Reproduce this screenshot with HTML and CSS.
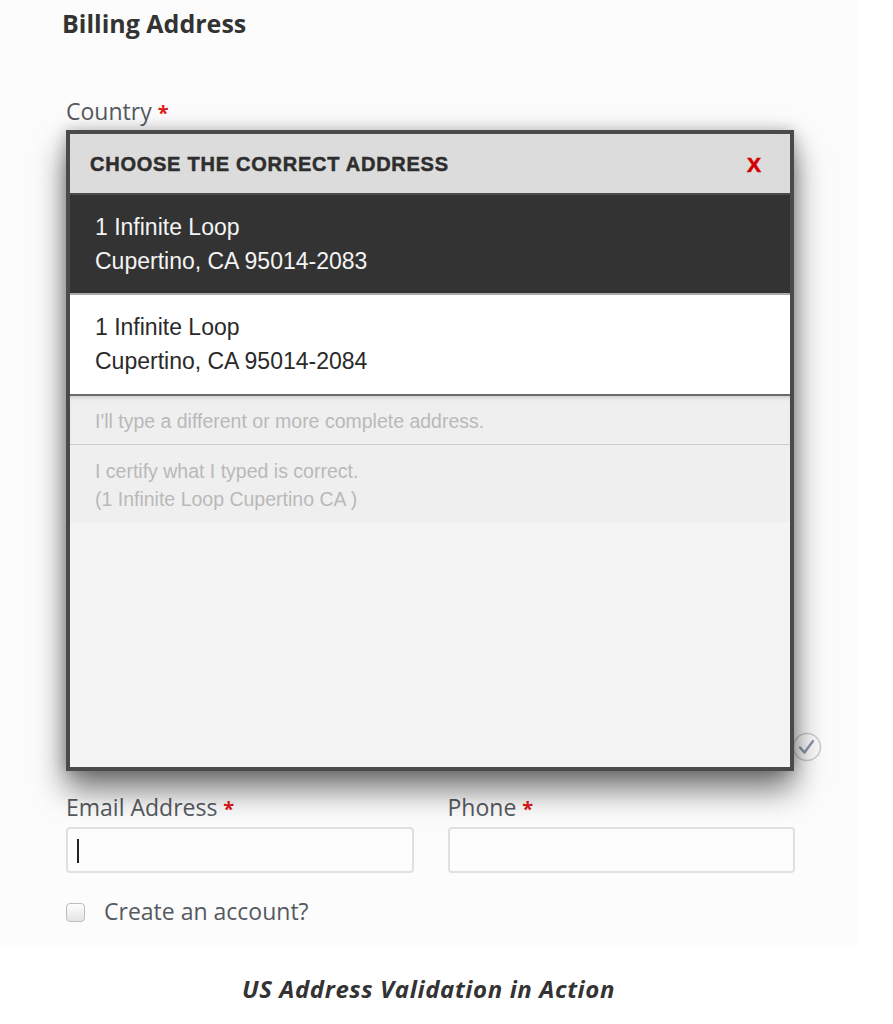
FILE: index.html
```html
<!DOCTYPE html>
<html lang="en">
<head>
<meta charset="utf-8">
<title>US Address Validation in Action</title>
<link rel="stylesheet" href="styles.css">
</head>
<body>
<div class="shot">
  <h2 class="title">Billing Address</h2>
  <div class="form">
    <div class="label">Country <span class="req">*</span></div>
    <div class="hidden-fields">
      <span class="check">
        <svg viewBox="0 0 30 30" width="30" height="30">
          <circle cx="15" cy="15" r="13.5" fill="none" stroke="#cfcfcf" stroke-width="1.6"/>
          <path d="M8 15.5 L12.5 20.5 L21 9" fill="none" stroke="#8b98a8" stroke-width="2.4" stroke-linecap="round" stroke-linejoin="round"/>
        </svg>
      </span>
    </div>
    <div class="modal">
      <div class="modal-head">
        <span class="modal-title">Choose the correct address</span>
        <span class="close">x</span>
      </div>
      <div class="addr addr-active">
        <div>1 Infinite Loop</div>
        <div>Cupertino, CA 95014-2083</div>
      </div>
      <div class="addr addr-plain">
        <div>1 Infinite Loop</div>
        <div>Cupertino, CA 95014-2084</div>
      </div>
      <div class="opt opt-first">I'll type a different or more complete address.</div>
      <div class="opt opt-second">
        <div>I certify what I typed is correct.</div>
        <div>(1 Infinite Loop Cupertino CA )</div>
      </div>
      <div class="modal-rest"></div>
    </div>
    <div class="pair">
      <div class="field">
        <div class="label">Email Address <span class="req">*</span></div>
        <div class="input"><span class="caret"></span></div>
      </div>
      <div class="field">
        <div class="label">Phone <span class="req">*</span></div>
        <div class="input"></div>
      </div>
    </div>
    <div class="cb-row">
      <span class="cb"></span>
      <span class="cb-text">Create an account?</span>
    </div>
  </div>
</div>
<p class="caption">US Address Validation in Action</p>
</body>
</html>
```

FILE: styles.css
```css
* { box-sizing: border-box; }

html, body {
  margin: 0;
  padding: 0;
  background: #ffffff;
}

.shot {
  position: relative;
  width: 857px;
  height: 945px;
  background: #fcfcfc;
  padding-top: 8px;
}

.title {
  margin: 0 0 0 62px;
  font-family: "Open Sans", "Liberation Sans", sans-serif;
  font-weight: 700;
  font-size: 25px;
  line-height: 30px;
  color: #333;
}

.form {
  padding: 59px 62px 0 66px;
}

.label {
  font-family: "Open Sans", "Liberation Sans", sans-serif;
  font-size: 23px;
  line-height: 28px;
  color: #555a60;
}

.req {
  color: #e0191c;
  font-weight: 700;
  font-size: 20px;
}

.hidden-fields {
  height: 666px;
  margin-right: -27px;
  display: flex;
  justify-content: flex-end;
  align-items: flex-end;
  padding-bottom: 31px;
}

.check {
  display: block;
  width: 30px;
  height: 30px;
}
.check svg { display: block; }

.modal {
  position: absolute;
  left: 66px;
  top: 130px;
  width: 728px;
  height: 641px;
  border: 4px solid #4a4a4a;
  background: #f4f4f4;
  display: flex;
  flex-direction: column;
  box-shadow: 0 18px 30px rgba(0, 0, 0, 0.55), 0 0 14px rgba(0, 0, 0, 0.22);
  font-family: "Liberation Sans", Arial, sans-serif;
}

.modal-head {
  height: 61px;
  background: #dcdcdc;
  border-bottom: 2px solid #4a4a4a;
  display: flex;
  align-items: center;
  justify-content: space-between;
  padding: 2px 29px 0 20px;
  text-transform: uppercase;
  font-weight: 700;
  color: #2e2e2e;
}

.modal-title {
  font-size: 20px;
  letter-spacing: 0.75px;
  -webkit-text-stroke: 0.5px #2e2e2e;
}

.close {
  font-size: 21px;
  color: #d40000;
  -webkit-text-stroke: 0.6px #d40000;
}

.addr {
  padding: 15px 25px 0;
  font-size: 23px;
  line-height: 34px;
}

.addr-active {
  height: 98px;
  background: #333333;
  color: #f4f4f4;
}

.addr-plain {
  height: 101px;
  background: #ffffff;
  color: #2a2a2a;
  border-top: 2px solid #a9a9a9;
  padding-top: 15px;
}

.opt {
  background: #efefef;
  color: #b9b9b9;
  font-size: 19.5px;
  padding-left: 25px;
}

.opt-first {
  height: 51px;
  border-top: 2px solid #6a6a6a;
  box-shadow: inset 0 4px 5px -3px rgba(0, 0, 0, 0.18);
  line-height: 47px;
  padding-top: 2px;
  border-bottom: 1px solid #cdcdcd;
}

.opt-second {
  height: 77px;
  line-height: 28px;
  padding-top: 12px;
}

.modal-rest {
  flex: 1;
  background: #f4f4f4;
}

.pair {
  display: grid;
  grid-template-columns: 1fr 1fr;
  column-gap: 34px;
}

.input {
  margin-top: 4px;
  height: 46px;
  border: 2px solid #e0e0e0;
  border-radius: 4px;
  background: #fdfdfd;
  padding: 10px 0 0 9px;
}

.caret {
  display: block;
  width: 2px;
  height: 24px;
  background: #222;
}

.cb-row {
  margin-top: 24px;
  display: flex;
  align-items: center;
  height: 28px;
}

.cb {
  width: 19px;
  height: 19px;
  margin-top: 2px;
  border: 1.5px solid #bdbdbd;
  border-radius: 4px;
  background: linear-gradient(#fdfdfd, #e4e4e4);
}

.cb-text {
  margin-left: 19px;
  font-family: "Open Sans", "Liberation Sans", sans-serif;
  font-size: 23px;
  line-height: 28px;
  color: #555a60;
}

.caption {
  width: 857px;
  margin: 29px 0 0;
  text-align: center;
  font-family: "Open Sans", Lato, sans-serif;
  font-style: italic;
  font-weight: 700;
  font-size: 24px;
  letter-spacing: 0.6px;
  line-height: 30px;
  color: #333;
}
```
